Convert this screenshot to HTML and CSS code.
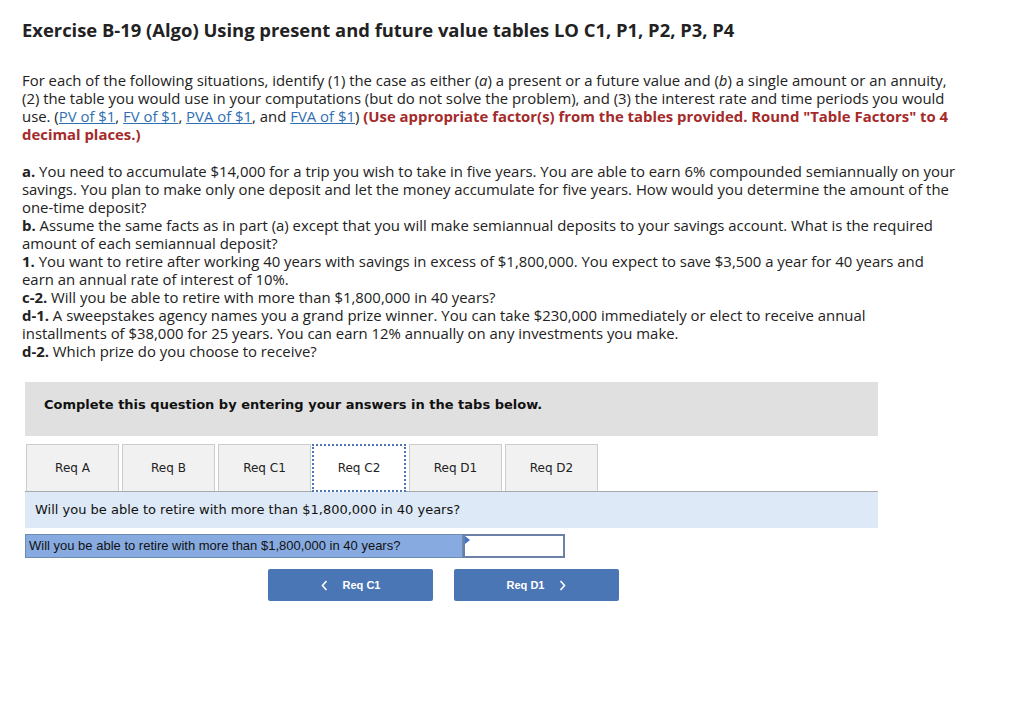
FILE: index.html
```html
<!DOCTYPE html>
<html>
<head>
<meta charset="utf-8">
<link rel="stylesheet" href="styles.css">
</head>
<body>
<div class="page">
  <h1 class="title">Exercise B-19 (Algo) Using present and future value tables LO C1, P1, P2, P3, P4</h1>
  <p class="intro">For each of the following situations, identify (1) the case as either (<i>a</i>) a present or a future value and (<i>b</i>) a single amount or an annuity,<br>(2) the table you would use in your computations (but do not solve the problem), and (3) the interest rate and time periods you would<br>use. (<a href="#">PV of $1</a>, <a href="#">FV of $1</a>, <a href="#">PVA of $1</a>, and <a href="#">FVA of $1</a>) <b class="red">(Use appropriate factor(s) from the tables provided. Round "Table Factors" to 4<br>decimal places.)</b></p>
  <p class="body">
    <b>a.</b> You need to accumulate $14,000 for a trip you wish to take in five years. You are able to earn 6% compounded semiannually on your<br>savings. You plan to make only one deposit and let the money accumulate for five years. How would you determine the amount of the<br>one-time deposit?<br>
    <b>b.</b> Assume the same facts as in part (a) except that you will make semiannual deposits to your savings account. What is the required<br>amount of each semiannual deposit?<br>
    <b>1.</b> You want to retire after working 40 years with savings in excess of $1,800,000. You expect to save $3,500 a year for 40 years and<br>earn an annual rate of interest of 10%.<br>
    <b>c-2.</b> Will you be able to retire with more than $1,800,000 in 40 years?<br>
    <b>d-1.</b> A sweepstakes agency names you a grand prize winner. You can take $230,000 immediately or elect to receive annual<br>installments of $38,000 for 25 years. You can earn 12% annually on any investments you make.<br>
    <b>d-2.</b> Which prize do you choose to receive?
  </p>

  <div class="question">
    <div class="banner">Complete this question by entering your answers in the tabs below.</div>
    <div class="tabs">
      <div class="tab">Req A</div>
      <div class="tab">Req B</div>
      <div class="tab">Req C1</div>
      <div class="tab active">Req C2</div>
      <div class="tab">Req D1</div>
      <div class="tab">Req D2</div>
    </div>
    <div class="prompt">Will you be able to retire with more than $1,800,000 in 40 years?</div>
    <div class="answer-row">
      <div class="answer-label">Will you be able to retire with more than $1,800,000 in 40 years?</div>
      <div class="answer-input"><span class="marker"></span></div>
    </div>
    <div class="nav">
      <button class="nav-btn"><svg class="chev" width="7" height="11" viewBox="0 0 7 11"><path d="M5.5 1 L1.5 5.5 L5.5 10" fill="none" stroke="#fff" stroke-width="1.6"/></svg><span>Req C1</span></button>
      <button class="nav-btn"><span>Req D1</span><svg class="chev" width="7" height="11" viewBox="0 0 7 11"><path d="M1.5 1 L5.5 5.5 L1.5 10" fill="none" stroke="#fff" stroke-width="1.6"/></svg></button>
    </div>
  </div>
</div>
</body>
</html>
```
FILE: styles.css
```css
html, body { margin: 0; padding: 0; background: #fff; }
.page { padding: 17px 0 0 22px; font-family: "Open Sans", "Liberation Sans", sans-serif; color: #222; }
.title { margin: 0; font-size: 18.4px; font-weight: 700; color: #222; line-height: 26px; white-space: nowrap; }
.intro { margin: 28px 0 0 0; font-size: 14.9px; line-height: 18px; white-space: nowrap; }
.intro i { font-style: italic; }
.intro a { color: #2f6fb5; text-decoration: underline; }
.red { color: #a52a2a; }
.body { margin: 19px 0 0 0; font-size: 14.9px; line-height: 18px; white-space: nowrap; }
.question { margin: 22px 0 0 3px; width: 853px; }
.banner { background: #e0e0e0; height: 54px; box-sizing: border-box; padding: 15px 0 0 19px; font-family: "DejaVu Sans", Verdana, sans-serif; font-weight: 700; font-size: 13px; color: #111; }
.tabs { display: flex; gap: 3px; margin-top: 8px; border-bottom: 1px solid #aaa; padding-left: 1px; }
.tab { width: 93px; height: 47px; box-sizing: border-box; border: 1px solid #ccc; border-bottom: none; background: #f1f1f1; display: flex; align-items: center; justify-content: center; font-family: "DejaVu Sans", Verdana, sans-serif; font-size: 12px; color: #222; }
.tab.active { background: #fff; border: 2px dotted #4a76b5; margin-bottom: -1px; margin-left: -2px; height: 48px; width: 94px; }
.prompt { background: #dde9f6; height: 36px; box-sizing: border-box; padding: 10px 0 0 10px; font-family: "DejaVu Sans", Verdana, sans-serif; font-size: 13px; color: #111; }
.answer-row { display: flex; margin-top: 6px; height: 24px; }
.answer-label { width: 438px; box-sizing: border-box; background: #87abe0; border: 1px solid #6e8bb0; font-family: "Liberation Sans", Arial, sans-serif; font-size: 13px; color: #111; padding: 3px 0 0 3px; }
.answer-input { position: relative; width: 102px; box-sizing: border-box; background: #fff; border: 2px solid #6b82a6; }
.marker { position: absolute; left: 0; top: 0; width: 0; height: 0; border-top: 4px solid transparent; border-bottom: 4px solid transparent; border-left: 5px solid #3d74c4; }
.nav { display: flex; gap: 21px; margin: 11px 0 0 243px; }
.nav-btn { width: 165px; height: 32px; border: none; border-radius: 2px; background: #4a76b5; color: #fff; font-family: "Liberation Sans", Arial, sans-serif; font-weight: 700; font-size: 11px; display: flex; align-items: center; justify-content: center; gap: 15px; padding: 0; }
.chev { display: block; }
```
